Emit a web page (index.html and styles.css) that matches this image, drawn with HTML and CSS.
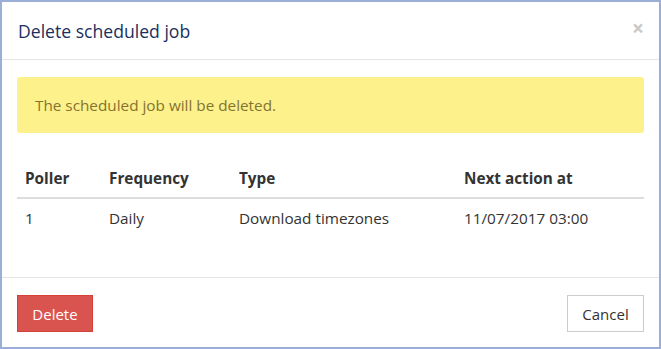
FILE: index.html
```html
<!doctype html>
<html lang="en">
  <head>
    <meta charset="UTF-8" />
    <title>Delete scheduled job</title>
    <link rel="stylesheet" href="styles.css">
  </head>
  <body>
    <div class="modal">
      <div class="modal-header">
        <h4 class="modal-title">Delete scheduled job</h4>
        <button class="close" type="button">&times;</button>
      </div>

      <div class="modal-body">
        <div class="alert">The scheduled job will be deleted.</div>
        <table class="jobs">
          <thead>
            <tr>
              <th class="col-poller">Poller</th>
              <th class="col-freq">Frequency</th>
              <th class="col-type">Type</th>
              <th>Next action at</th>
            </tr>
          </thead>
          <tbody>
            <tr>
              <td>1</td>
              <td>Daily</td>
              <td>Download timezones</td>
              <td>11/07/2017 03:00</td>
            </tr>
          </tbody>
        </table>
      </div>

      <div class="modal-footer">
        <button class="btn btn-danger" type="button">Delete</button>
        <button class="btn btn-default" type="button">Cancel</button>
      </div>
    </div>
  </body>
</html>
```

FILE: styles.css
```css
html, body {
  margin: 0;
  height: 100%;
}
body {
  font-family: "Open Sans", Arial, sans-serif;
  font-size: 15.3px;
  color: #333;
  background: #ffffff;
}
.modal {
  box-sizing: border-box;
  height: 349px;
  border: 2px solid #9aaed8;
  background: #fff;
  display: flex;
  flex-direction: column;
}
.modal-header {
  height: 57px;
  border-bottom: 1px solid #e5e5e5;
  padding: 0 15px 0 16px;
  display: flex;
  align-items: center;
  justify-content: space-between;
}
.modal-title {
  margin: 0;
  font-size: 17.6px;
  font-weight: normal;
  color: #1a2f5e;
}
.close {
  border: none;
  background: none;
  padding: 0;
  margin-top: -5px;
  font-family: "Open Sans", Arial, sans-serif;
  font-size: 21px;
  font-weight: bold;
  color: #c9c9c9;
  cursor: pointer;
}
.modal-body {
  padding: 17px 15px 0 15px;
  flex: 1;
}
.alert {
  height: 56px;
  box-sizing: border-box;
  padding: 0 18px;
  display: flex;
  align-items: center;
  background: #fcf18a;
  color: #857332;
  border-radius: 3px;
}
.jobs {
  width: 100%;
  margin-top: 26px;
  border-collapse: collapse;
}
.jobs th,
.jobs td {
  text-align: left;
  padding: 8px;
  line-height: 22px;
}
.jobs th {
  font-weight: bold;
  color: #333;
  border-bottom: 2px solid #dddddd;
}
.col-poller {
  width: 68px;
}
.col-freq {
  width: 114px;
}
.col-type {
  width: 209px;
}
.modal-footer {
  border-top: 1px solid #e5e5e5;
  padding: 17px 15px 15px 15px;
  display: flex;
  justify-content: space-between;
}
.btn {
  height: 37px;
  box-sizing: border-box;
  padding: 0 10px;
  font-family: "Open Sans", Arial, sans-serif;
  font-size: 15px;
  border-radius: 0;
  cursor: pointer;
}
.btn-danger {
  width: 76px;
  background: #d9534f;
  border: 1px solid #d43f3a;
  color: #fff;
}
.btn-default {
  width: 77px;
  background: #fff;
  border: 1px solid #cccccc;
  color: #333;
}
```
